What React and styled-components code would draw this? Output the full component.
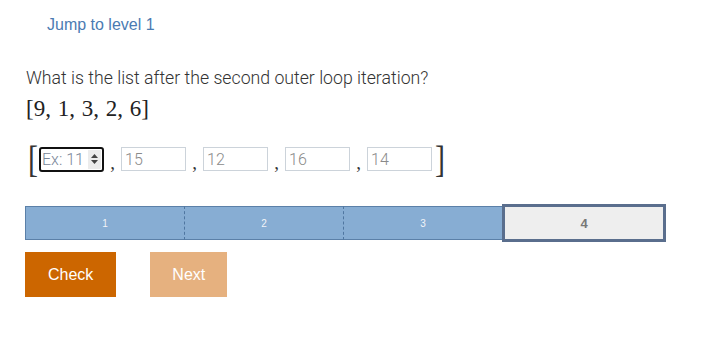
import styled, { createGlobalStyle } from "styled-components";

const Global = createGlobalStyle`
  body {
    margin: 0;
    background: #fff;
    font-family: "Liberation Sans", Arial, sans-serif;
  }
`;

const Page = styled.div`
  padding: 14px 0 0 25px;
  width: 641px;
`;

const JumpLink = styled.a`
  display: block;
  margin-left: 22px;
  font-size: 16px;
  line-height: 22px;
  color: #4b7bb2;
  text-decoration: none;
  cursor: pointer;
`;

const Question = styled.p`
  margin: 30px 0 0 1px;
  font-family: Roboto, "Liberation Sans", sans-serif;
  font-weight: 300;
  font-size: 17.7px;
  line-height: 24px;
  color: #333;
`;

const MathLine = styled.div`
  margin: 4px 0 0 1px;
  font-family: "Liberation Serif", "Times New Roman", serif;
  font-size: 23px;
  line-height: 30px;
  word-spacing: 1px;
  color: #222;
`;

const AnswerRow = styled.div`
  display: flex;
  align-items: center;
  margin: 18px 0 0 3px;
  height: 34px;
`;

const Bracket = styled.span`
  display: inline-block;
  font-family: "Liberation Serif", serif;
  font-size: 30px;
  line-height: 30px;
  color: #333;
  transform: scaleY(1.25);
  margin-left: ${(p) => (p.$close ? "3px" : "0")};
`;

const Comma = styled.span`
  font-family: "Liberation Serif", serif;
  font-size: 19px;
  color: #333;
  width: 17px;
  text-align: center;
  padding-top: 8px;
`;

const FocusBox = styled.div`
  display: flex;
  align-items: center;
  width: 65px;
  height: 25px;
  box-sizing: border-box;
  border: 2px solid #111;
  border-radius: 3px;
  padding-left: 1px;
  margin-left: 1px;
`;

const FieldText = styled.span`
  flex: 1;
  font-family: Roboto, "Liberation Sans", sans-serif;
  font-weight: 300;
  font-size: 16px;
  color: #7a8799;
`;

const Spinner = styled.span`
  display: flex;
  flex-direction: column;
  align-items: center;
  justify-content: center;
  gap: 2px;
  width: 13px;
  height: 19px;
  background: #ececec;
  margin-right: 1px;
`;

const Field = styled.input`
  width: 65px;
  height: 24px;
  box-sizing: border-box;
  border: 1px solid #ccd3da;
  padding: 0 3px;
  font-family: Roboto, "Liberation Sans", sans-serif;
  font-weight: 300;
  font-size: 16px;
  color: #8a8a8a;
  outline: none;
`;

const Progress = styled.div`
  display: flex;
  align-items: center;
  margin-top: 28px;
  width: 641px;
`;

const Segment = styled.div`
  flex: 1;
  height: 34px;
  box-sizing: border-box;
  display: flex;
  align-items: center;
  justify-content: center;
  background: #87add3;
  border-top: 1px solid #5b80a8;
  border-bottom: 1px solid #5b80a8;
  border-left: ${(p) => (p.$first ? "1px solid #5b80a8" : "1px dashed #4f76a0")};
  font-size: 10px;
  color: #f2f4f8;
`;

const Current = styled.div`
  flex: 1;
  height: 38px;
  box-sizing: border-box;
  display: flex;
  align-items: center;
  justify-content: center;
  background: #eeeeee;
  border: 3px solid #5a6e8d;
  font-size: 13px;
  font-weight: bold;
  color: #777;
`;

const Buttons = styled.div`
  display: flex;
  gap: 34px;
  margin-top: 10px;
`;

const Button = styled.button`
  height: 45px;
  padding: 0 ${(p) => (p.$disabled ? "22px" : "23px")};
  border: none;
  background: ${(p) => (p.$disabled ? "#e6b17f" : "#cc6600")};
  color: #fff;
  font-family: "Liberation Sans", Arial, sans-serif;
  font-size: 16px;
  cursor: ${(p) => (p.$disabled ? "default" : "pointer")};
`;

const Arrow = ({ up }) => (
  <svg width="7" height="4" viewBox="0 0 7 4">
    <path d={up ? "M0 4 L3.5 0 L7 4 Z" : "M0 0 L3.5 4 L7 0 Z"} fill="#444" />
  </svg>
);

export default function App() {
  const values = ["15", "12", "16", "14"];
  return (
    <>
      <Global />
      <Page>
        <JumpLink>Jump to level 1</JumpLink>
        <Question>What is the list after the second outer loop iteration?</Question>
        <MathLine>[9, 1, 3, 2, 6]</MathLine>
        <AnswerRow>
          <Bracket>[</Bracket>
          <FocusBox>
            <FieldText>Ex: 11</FieldText>
            <Spinner>
              <Arrow up />
              <Arrow />
            </Spinner>
          </FocusBox>
          {values.map((v) => (
            <span key={v} style={{ display: "contents" }}>
              <Comma>,</Comma>
              <Field defaultValue={v} />
            </span>
          ))}
          <Bracket $close>]</Bracket>
        </AnswerRow>
        <Progress>
          <Segment $first>1</Segment>
          <Segment>2</Segment>
          <Segment>3</Segment>
          <Current>4</Current>
        </Progress>
        <Buttons>
          <Button>Check</Button>
          <Button $disabled>Next</Button>
        </Buttons>
      </Page>
    </>
  );
}
